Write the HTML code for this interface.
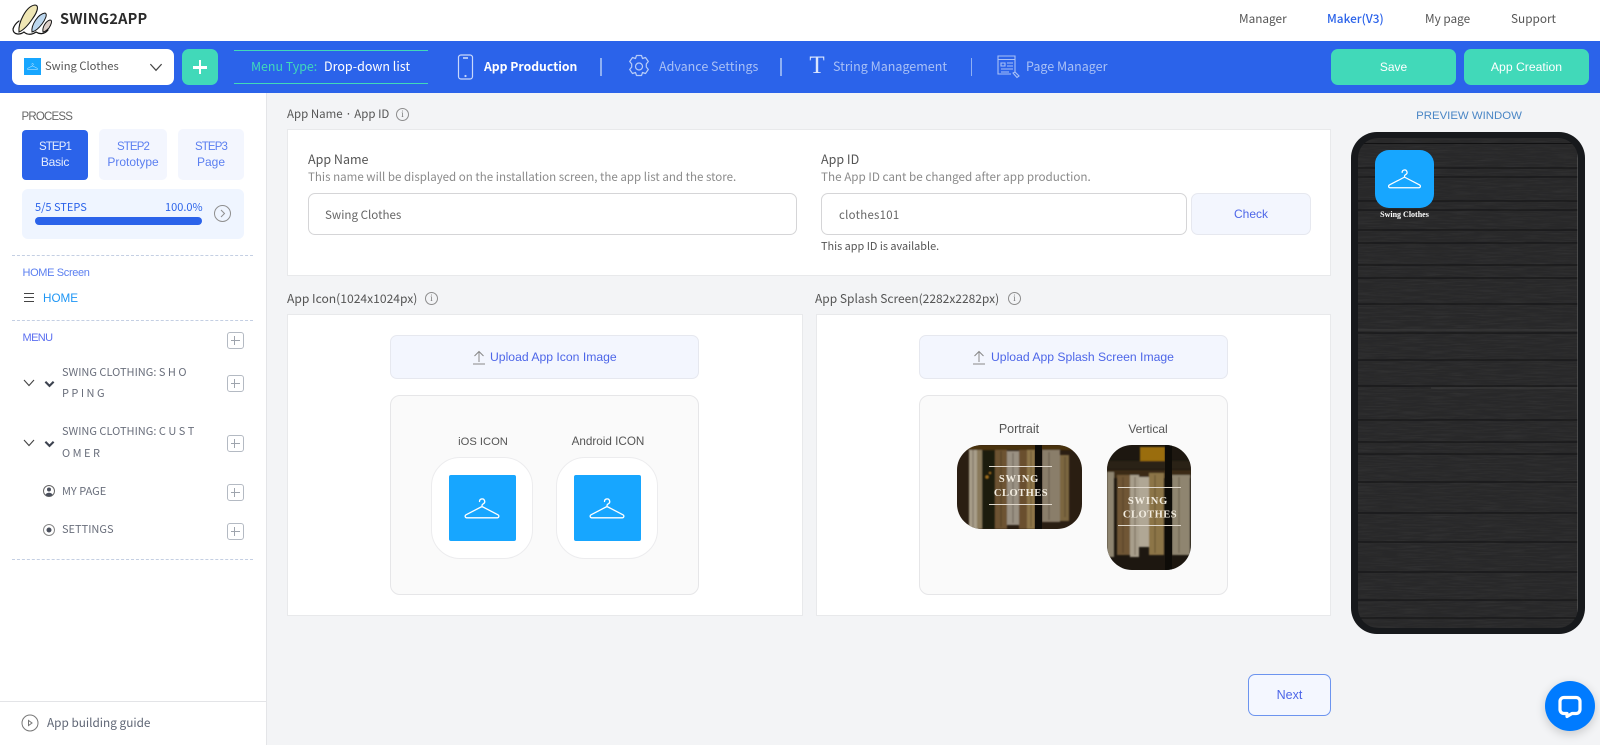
<!DOCTYPE html>
<html lang="en"><head><meta charset="utf-8"><title>Swing2App</title>
<style>
*{box-sizing:border-box}
html,body{margin:0;padding:0}
body{width:1600px;height:744px;overflow:hidden;position:relative;background:#f3f4f6;font-family:"Liberation Sans","Noto Sans CJK KR",sans-serif;color:#555}
.a,.n,.u{position:absolute}
.n{font-family:"Noto Sans CJK KR","Liberation Sans",sans-serif;white-space:nowrap;line-height:20px;font-size:12px}
.u{font-family:"Liberation Sans",sans-serif;white-space:nowrap;line-height:20px;font-size:12px}
.c{text-align:center}
.nav{color:#a9c1f6;font-size:12.5px}
.sep{position:absolute;top:58px;width:2px;height:18px;background:#8fb0f3}
.panel{position:absolute;background:#fff;border:1px solid #e8e9eb}
.input{position:absolute;background:#fff;border:1px solid #d5d5d7;border-radius:7px}
.soft{position:absolute;background:#f3f6fe;border:1px solid #e6e8ef;border-radius:7px}
.box{position:absolute;background:#fafafa;border:1px solid #e6e6e8;border-radius:10px}
.plus{position:absolute;left:226.5px;width:17px;height:17px;border:1.2px solid #b4bac3;border-radius:3px}
.plus:before{content:"";position:absolute;left:3px;right:3px;top:6.6px;height:1.2px;background:#9ea4ad}
.plus:after{content:"";position:absolute;top:3px;bottom:3px;left:6.6px;width:1.2px;background:#9ea4ad}
.dash{position:absolute;left:12px;width:241px;border-top:1px dashed #c4cfe3}
.ic{position:absolute;background:#fff;border:1px solid #ececee;border-radius:29px;width:102px;height:102px;top:457px}
.bl{position:absolute;left:17px;top:16.500px;width:66.500px;height:66.500px;background:#17a6ff;border-radius:2px}
.info{position:absolute;width:13px;height:13px;border:1px solid #8d8d8d;border-radius:50%;font:9px/11px "Liberation Serif",serif;color:#777;text-align:center}
.st{letter-spacing:-.9px;font-size:11.5px}
</style></head>
<body>
<svg width="0" height="0" style="position:absolute"><defs>
<symbol id="hanger" viewBox="0 0 35 21"><path d="M15 3.500a2.600 2.600 0 1 1 3.800 2.300c-.8.4-1.300 1-1.300 2v.7L33.500 16.800c1.400.8 1 3-.8 3H2.300c-1.800 0-2.200-2.200-.8-3L17.500 8.500" fill="none" stroke="#fff" stroke-width="1.300" stroke-linejoin="round" stroke-linecap="round"/></symbol>
<symbol id="chev" viewBox="0 0 12 8"><path d="M1 1l5 5.500L11 1" fill="none" stroke="#444" stroke-width="1.100"/></symbol>
<symbol id="chevb" viewBox="0 0 12 8"><path d="M1.500 1.500L6 6l4.500-4.500" fill="none" stroke="#3d4350" stroke-width="2.300"/></symbol>
<filter id="wood" x="0" y="0" width="100%" height="100%"><feTurbulence type="fractalNoise" baseFrequency="0.04 0.7" numOctaves="3" seed="7"/><feColorMatrix values="0 0 0 0 1  0 0 0 0 1  0 0 0 0 1  .7 0 0 0 -.27"/></filter>
<filter id="soft"><feGaussianBlur stdDeviation=".7"/></filter>
</defs></svg>

<!-- top bar -->
<div class="a" style="left:0;top:0;width:1600px;height:41px;background:#fff"></div>
<svg class="a" style="left:12px;top:3px" width="41" height="33" viewBox="0 0 41 33">
<path d="M7 29C6 20 14 3 23 2c4 0 3 6-2 13-4 6-9 12-14 14z" fill="#efe6b4" stroke="#151515" stroke-width="1.100"/>
<path d="M20 29c-1-7 6-18 13-19 3 1 0 7-3 11-3 4-6 7-10 8z" fill="#bcd7ef" stroke="#151515" stroke-width="1"/>
<path d="M31 29c-1-5 3-11 7-12 3 0 1 5-1 8-2 2-4 4-6 4z" fill="#dccfc8" stroke="#151515" stroke-width="1"/>
<path d="M1 26c0 6 7 6 11 3 3 3 8 3 12 0 3 2 8 3 12-2M1 26c1-3 3-6 6-8" fill="none" stroke="#151515" stroke-width="1.200" stroke-linecap="round"/>
</svg>
<div class="n" style="left:60px;top:9px;font-size:14.500px;font-weight:700;color:#2a2a2a;letter-spacing:.2px">SWING2APP</div>
<div class="n" style="left:1239px;top:9px;color:#555;font-size:11.8px">Manager</div>
<div class="n" style="left:1327px;top:9px;color:#2b63ea;font-weight:500;font-size:11.8px">Maker(V3)</div>
<div class="n" style="left:1425px;top:9px;color:#555;font-size:11.8px">My page</div>
<div class="n" style="left:1511px;top:9px;color:#555;font-size:11.8px">Support</div>

<!-- blue bar -->
<div class="a" style="left:0;top:41px;width:1600px;height:51.500px;background:#2b63ea"></div>
<div class="a" style="left:12px;top:49px;width:162px;height:36px;background:#fff;border-radius:7px"></div>
<div class="a" style="left:24px;top:58px;width:17px;height:17px;background:#17a6ff"><svg class="a" style="left:3px;top:5px" width="11" height="7"><use href="#hanger"/></svg></div>
<div class="n" style="left:45px;top:56px;color:#555;font-size:11.2px">Swing Clothes</div>
<svg class="a" style="left:149px;top:63px" width="14" height="9"><use href="#chev"/></svg>
<div class="a" style="left:182px;top:49px;width:36px;height:36px;background:#41d9b9;border-radius:7px"></div>
<div class="a" style="left:193px;top:66px;width:14px;height:2.500px;background:#fff"></div>
<div class="a" style="left:198.800px;top:60px;width:2.500px;height:14px;background:#fff"></div>
<div class="a" style="left:234px;top:50px;width:194px;height:34px;border-top:1px solid #41d9b9;border-bottom:1px solid #41d9b9"></div>
<div class="n" style="left:251px;top:56px;font-size:12.4px;color:#41d9b9">Menu Type:</div>
<div class="n" style="left:324px;top:56px;font-size:12.5px;color:#fff">Drop-down list</div>

<svg class="a" style="left:457px;top:54px" width="17" height="26" viewBox="0 0 17 26" fill="none" stroke="#c9d8fb" stroke-width="1.200"><rect x="1.500" y="1" width="14" height="24" rx="2.500"/><path d="M6 4h5" stroke-width="1.600"/><circle cx="8.500" cy="22" r=".5"/></svg>
<div class="n" style="left:484px;top:56px;font-size:12.2px;font-weight:700;color:#fff">App Production</div>
<div class="sep" style="left:600px"></div>
<svg class="a" style="left:627px;top:54px" width="24" height="25" viewBox="0 0 24 25" fill="none" stroke="#b7ccf8" stroke-width="1.200"><path d="M9.500 1.500h5l1 3 3-1 2.800 4-2 2.500v3l2 2.500-2.800 4-3-1-1 3h-5l-1-3-3 1-2.800-4 2-2.500v-3l-2-2.500 2.800-4 3 1z" stroke-linejoin="round"/><circle cx="12" cy="12.500" r="3.500"/></svg>
<div class="n nav" style="left:659px;top:56px">Advance Settings</div>
<div class="sep" style="left:780px"></div>
<div class="a" style="left:808px;top:53px;width:18px;height:26px;font:400 25px/26px 'Liberation Serif',serif;color:#dbe6fd;text-align:center">T</div>
<div class="n nav" style="left:833px;top:56px">String Management</div>
<div class="sep" style="left:971px;width:1px"></div>
<svg class="a" style="left:997px;top:54px" width="24" height="26" viewBox="0 0 24 26" fill="none" stroke="#a9c1f6" stroke-width="1.100"><path d="M18 18V2H1v18h13M1 5.500h17M4 9h4v3H4zM10 9h6M10 12h6M4 15h12M4 18h8"/><path d="M16 19l4 4.500 2-1.500-4-4z"/></svg>
<div class="n nav" style="left:1026px;top:56px">Page Manager</div>
<div class="a" style="left:1331px;top:49px;width:125px;height:36px;background:#41d9b9;border-radius:7px"></div>
<div class="u c" style="left:1331px;top:57px;width:125px;font-size:12px;color:#fff">Save</div>
<div class="a" style="left:1464px;top:49px;width:125px;height:36px;background:#41d9b9;border-radius:7px"></div>
<div class="u c" style="left:1464px;top:57px;width:125px;font-size:12.2px;color:#fff">App Creation</div>

<!-- sidebar -->
<div class="a" style="left:0;top:92.500px;width:267px;height:652px;background:#fff;border-right:1px solid #e4e5e8"></div>
<div class="u" style="left:21.500px;top:107px;color:#666;font-size:11.5px;letter-spacing:-.8px">PROCESS</div>
<div class="a" style="left:22px;top:130px;width:66px;height:50px;background:#2b63ea;border-radius:4px"></div>
<div class="a" style="left:99px;top:129px;width:68px;height:51px;background:#f3f6fe;border-radius:5px"></div>
<div class="a" style="left:178px;top:129px;width:66px;height:51px;background:#f3f6fe;border-radius:5px"></div>
<div class="u c st" style="left:22px;top:137px;width:66px;color:#e6edfd">STEP1</div>
<div class="u c" style="left:22px;top:152px;width:66px;color:#e6edfd;letter-spacing:-.2px">Basic</div>
<div class="u c st" style="left:99px;top:137px;width:68px;color:#5b7ff0">STEP2</div>
<div class="u c" style="left:99px;top:152px;width:68px;color:#5b7ff0">Prototype</div>
<div class="u c st" style="left:178px;top:137px;width:66px;color:#5b7ff0">STEP3</div>
<div class="u c" style="left:178px;top:152px;width:66px;color:#5b7ff0">Page</div>
<div class="a" style="left:22px;top:189px;width:222px;height:50px;background:#eff5ff;border-radius:6px"></div>
<div class="n" style="left:35px;top:197px;font-size:11px;color:#2b63ea">5/5 STEPS</div>
<div class="n" style="left:165px;top:197px;font-size:11px;color:#2b63ea">100.0%</div>
<div class="a" style="left:35px;top:217px;width:167px;height:8px;background:#2b63ea;border-radius:4px"></div>
<svg class="a" style="left:213px;top:204px" width="19" height="19" fill="none" stroke="#8f8f8f"><circle cx="9.500" cy="9.500" r="8"/><path d="M8 6l3.500 3.500L8 13"/></svg>
<div class="dash" style="top:255px"></div>
<div class="u" style="left:22.500px;top:263px;color:#5b7ff0;font-size:11px;letter-spacing:-.35px">HOME Screen</div>
<div class="a" style="left:24px;top:293px;width:10px;height:9px;border-top:1px solid #444;border-bottom:1px solid #444"></div>
<div class="a" style="left:24px;top:297px;width:10px;height:1px;background:#444"></div>
<div class="u" style="left:43px;top:288.500px;color:#1e96f5;font-size:11.7px">HOME</div>
<div class="dash" style="top:320px"></div>
<div class="u" style="left:22.500px;top:328px;color:#5b6ff0;font-size:11px;letter-spacing:-.6px">MENU</div>
<div class="plus" style="top:332px"></div>
<div class="n" style="left:62px;top:362px;font-size:11px;color:#6a6f7c">SWING CLOTHING: S H O</div>
<div class="n" style="left:62px;top:383px;font-size:11px;color:#6a6f7c">P P I N G</div>
<svg class="a" style="left:23px;top:379px" width="12" height="8"><use href="#chev"/></svg>
<svg class="a" style="left:44px;top:380px" width="11" height="8"><use href="#chevb"/></svg>
<div class="plus" style="top:375px"></div>
<div class="n" style="left:62px;top:421px;font-size:11px;color:#6a6f7c">SWING CLOTHING: C U S T</div>
<div class="n" style="left:62px;top:443px;font-size:11px;color:#6a6f7c">O M E R</div>
<svg class="a" style="left:23px;top:439px" width="12" height="8"><use href="#chev"/></svg>
<svg class="a" style="left:44px;top:440px" width="11" height="8"><use href="#chevb"/></svg>
<div class="plus" style="top:435px"></div>
<svg class="a" style="left:43px;top:485px" width="12" height="12" viewBox="0 0 12 12"><circle cx="6" cy="6" r="5.500" fill="#fff" stroke="#666"/><circle cx="6" cy="4.500" r="2" fill="#4a4f5c"/><path d="M2.500 10c.5-3 6.500-3 7 0a5 5 0 0 1-7 0z" fill="#4a4f5c"/></svg>
<div class="n" style="left:62px;top:481px;font-size:11px;color:#6a6f7c">MY PAGE</div>
<div class="plus" style="top:484px"></div>
<svg class="a" style="left:43px;top:524px" width="12" height="12" viewBox="0 0 12 12"><circle cx="6" cy="6" r="5.500" fill="#fff" stroke="#888"/><circle cx="6" cy="6" r="2.500" fill="#4a4f5c"/></svg>
<div class="n" style="left:62px;top:519px;font-size:11px;color:#6a6f7c">SETTINGS</div>
<div class="plus" style="top:523px"></div>
<div class="dash" style="top:559px"></div>
<div class="a" style="left:0;top:701px;width:266px;height:1px;background:#e3e4e7"></div>
<svg class="a" style="left:21px;top:714px" width="18" height="18" fill="none" stroke="#777"><circle cx="9" cy="9" r="8"/><path d="M7.500 6.500v5l3.500-2.500z"/></svg>
<div class="n" style="left:47px;top:713px;font-size:11.8px;color:#5f6675">App building guide</div>

<!-- main -->
<div class="n" style="left:287px;top:104px;font-size:11.5px;color:#555">App Name · App ID</div>
<div class="info" style="left:396px;top:108px">i</div>
<div class="panel" style="left:287px;top:129px;width:1044px;height:147px"></div>
<div class="n" style="left:308px;top:149px;font-size:12.5px;color:#555">App Name</div>
<div class="n" style="left:308px;top:167px;font-size:11.55px;color:#8b8b8b">This name will be displayed on the installation screen, the app list and the store.</div>
<div class="input" style="left:308px;top:193px;width:489px;height:42px"></div>
<div class="n" style="left:325px;top:205px;font-size:11.6px;color:#666">Swing Clothes</div>
<div class="n" style="left:821px;top:149px;font-size:12.5px;color:#555">App ID</div>
<div class="n" style="left:821px;top:167px;font-size:11.7px;color:#8b8b8b">The App ID cant be changed after app production.</div>
<div class="input" style="left:821px;top:193px;width:366px;height:42px"></div>
<div class="n" style="left:839px;top:205px;font-size:11.4px;color:#666;letter-spacing:.3px">clothes101</div>
<div class="soft" style="left:1191px;top:193px;width:120px;height:42px"></div>
<div class="u c" style="left:1191px;top:204px;width:120px;color:#4d66e8;font-size:12px">Check</div>
<div class="n" style="left:821px;top:236px;font-size:10.9px;color:#555">This app ID is available.</div>

<div class="n" style="left:287px;top:289px;font-size:12.1px;color:#555">App Icon(1024x1024px)</div>
<div class="info" style="left:425px;top:292px">i</div>
<div class="n" style="left:815px;top:289px;font-size:12px;color:#555">App Splash Screen(2282x2282px)</div>
<div class="info" style="left:1008px;top:292px">i</div>
<div class="panel" style="left:287px;top:314px;width:516px;height:302px"></div>
<div class="panel" style="left:816px;top:314px;width:515px;height:302px"></div>

<div class="soft" style="left:390px;top:335px;width:309px;height:44px"></div>
<svg class="a" style="left:472px;top:350px" width="14" height="15" fill="none" stroke="#888"><path d="M7 12V2M2.500 6L7 1.500 11.500 6M1 14h12"/></svg>
<div class="u" style="left:490px;top:347px;color:#4d66e8;font-size:12.2px">Upload App Icon Image</div>
<div class="box" style="left:390px;top:395px;width:309px;height:200px"></div>
<div class="u c" style="left:432px;top:432px;width:102px;color:#555;font-size:11.2px">iOS ICON</div>
<div class="u c" style="left:557px;top:432px;width:102px;color:#555;font-size:11.7px">Android ICON</div>
<div class="ic" style="left:431px"><div class="bl"><svg class="a" style="left:15px;top:23px" width="36" height="21"><use href="#hanger"/></svg></div></div>
<div class="ic" style="left:556px"><div class="bl"><svg class="a" style="left:15px;top:23px" width="36" height="21"><use href="#hanger"/></svg></div></div>

<div class="soft" style="left:919px;top:335px;width:309px;height:44px"></div>
<svg class="a" style="left:972px;top:350px" width="14" height="15" fill="none" stroke="#888"><path d="M7 12V2M2.500 6L7 1.500 11.500 6M1 14h12"/></svg>
<div class="u" style="left:991px;top:347px;color:#4d66e8;font-size:12.2px">Upload App Splash Screen Image</div>
<div class="box" style="left:919px;top:395px;width:309px;height:200px"></div>
<div class="u c" style="left:969px;top:419px;width:100px;color:#555;font-size:12.5px">Portrait</div>
<div class="u c" style="left:1098px;top:419px;width:100px;color:#555">Vertical</div>

<svg class="a" style="left:957px;top:445px" width="125" height="84" viewBox="0 0 125 84">
<defs><clipPath id="cp"><rect width="125" height="84" rx="25"/></clipPath></defs>
<g clip-path="url(#cp)"><rect width="125" height="84" fill="#2a1e12"/>
<g filter="url(#soft)">
<rect x="12" y="3" width="8" height="81" fill="#a89f8a"/><rect x="20" y="3" width="5" height="81" fill="#8a7a5c"/>
<rect x="25" y="0" width="13" height="84" fill="#1c1a10"/>
<rect x="38" y="5" width="12" height="79" fill="#6d5332"/><rect x="50" y="6" width="12" height="74" fill="#9a9183"/>
<rect x="62" y="4" width="8" height="80" fill="#6a4f2e"/><rect x="70" y="4" width="8" height="80" fill="#8f7748"/>
<rect x="85" y="5" width="18" height="72" fill="#8a7e6b"/><rect x="103" y="10" width="9" height="66" fill="#7c6640"/>
<rect x="3" y="0" width="120" height="5" fill="#4a3210"/><circle cx="30" cy="32" r="1.500" fill="#a8741a"/><circle cx="33" cy="28" r="1" fill="#a8741a"/>
<path d="M16 5v78M44 6v76M56 8v70M74 6v76M92 7v68M108 12v60" stroke="#2a1e12" stroke-width=".8" opacity=".5"/>
</g>
<rect x="78" y="0" width="7" height="84" fill="#0e0c08"/>
<path d="M32 21.500h63M32 59.500h63" stroke="#e0d8cc" stroke-width="1"/>
<text x="62" y="37" text-anchor="middle" font-family="Liberation Serif,serif" font-size="10.500" fill="#f2ece0" font-weight="700" letter-spacing=".8">SWING</text>
<text x="64" y="51" text-anchor="middle" font-family="Liberation Serif,serif" font-size="10.500" fill="#f2ece0" font-weight="700" letter-spacing=".5">CLOTHES</text></g></svg>

<svg class="a" style="left:1107px;top:445px" width="84" height="125" viewBox="0 0 84 125">
<defs><clipPath id="cq"><rect width="84" height="125" rx="25"/></clipPath></defs>
<g clip-path="url(#cq)"><rect width="84" height="125" fill="#1d1710"/>
<g filter="url(#soft)">
<rect x="33" y="2" width="25" height="16" fill="#9a6d10"/><rect x="0" y="16" width="84" height="8" fill="#2b2216"/>
<rect x="0" y="25" width="84" height="8" fill="#3a2b14"/>
<rect x="0" y="27" width="7" height="85" fill="#8f8570"/><rect x="10" y="30" width="13" height="80" fill="#6f5734"/>
<rect x="23" y="30" width="9" height="82" fill="#a89f8c"/><rect x="32" y="32" width="10" height="70" fill="#b0a795"/>
<rect x="42" y="28" width="15" height="82" fill="#8c7446"/><rect x="65" y="30" width="18" height="80" fill="#8f8570"/>
<path d="M16 32v76M28 32v78M48 30v78M72 32v76" stroke="#2a1e12" stroke-width=".8" opacity=".5"/>
</g>
<rect x="58" y="0" width="7" height="125" fill="#0e0c08"/>
<path d="M11 42.500h63M11 80.500h63" stroke="#e0d8cc" stroke-width="1"/>
<text x="41" y="59" text-anchor="middle" font-family="Liberation Serif,serif" font-size="10.500" fill="#f2ece0" font-weight="700" letter-spacing=".8">SWING</text>
<text x="43" y="72.500" text-anchor="middle" font-family="Liberation Serif,serif" font-size="10.500" fill="#f2ece0" font-weight="700" letter-spacing=".5">CLOTHES</text></g></svg>

<!-- preview -->
<div class="u c" style="left:1369px;top:106px;width:200px;color:#4a86c5;font-size:11.4px">PREVIEW WINDOW</div>
<svg class="a" style="left:1351px;top:132px" width="234" height="502" viewBox="0 0 234 502">
<defs><clipPath id="ph"><rect x="7" y="6" width="220" height="490" rx="20"/></clipPath></defs>
<rect width="234" height="502" rx="26" fill="#17191c"/>
<g clip-path="url(#ph)"><rect width="234" height="502" fill="#282829"/>
<rect width="234" height="502" filter="url(#wood)" opacity=".13"/>
<path d="M7 11.500h220M7 36h220M7 45h220M7 69h220M7 78h220M7 98h220M7 111h220M7 133h220M7 146h220M7 172h220M7 201h220M7 228h220M7 254h220M7 288h220M7 310h220M7 322h220M7 350h220M7 381h220M7 410h220M7 440h220M7 468h220M7 486h220" stroke="#111112" stroke-width="1"/>
<path d="M7 198h220M80 256h150" stroke="#4a4a4a" stroke-width="1" opacity=".6"/>
<path d="M227 6v490" stroke="#6a6a6a" stroke-width="1"/></g>
</svg>
<div class="a" style="left:1375px;top:150px;width:59px;height:58px;background:#17a6ff;border-radius:14px"><svg class="a" style="left:13px;top:19px" width="33" height="20"><use href="#hanger"/></svg></div>
<div class="a" style="left:1375px;top:208px;width:59px;text-align:center;font:700 8px/14px 'Liberation Serif',serif;color:#fff;white-space:nowrap">Swing Clothes</div>

<!-- next -->
<div class="a" style="left:1248px;top:674px;width:83px;height:42px;background:#f4f7ff;border:1px solid #6c94ef;border-radius:7px"></div>
<div class="u c" style="left:1248px;top:685px;width:83px;color:#4d66e8;font-size:12.5px">Next</div>

<!-- chat -->
<div class="a" style="left:1545px;top:681px;width:50px;height:50px;background:#007bff;border-radius:50%;box-shadow:0 3px 10px rgba(0,0,0,.18)"></div>
<svg class="a" style="left:1557px;top:695px" width="26" height="25" viewBox="0 0 26 25"><path d="M7 2.500h12a4 4 0 0 1 4 4v8a4 4 0 0 1-4 4h-4l-5 3v-3H7a4 4 0 0 1-4-4v-8a4 4 0 0 1 4-4z" fill="none" stroke="#fff" stroke-width="3.200" stroke-linejoin="round"/></svg>
</body></html>
